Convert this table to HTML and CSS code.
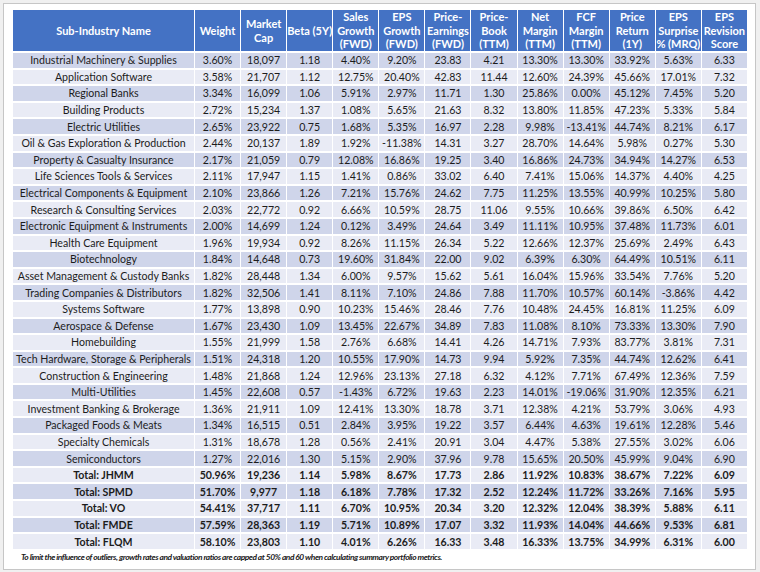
FILE: index.html
```html
<!DOCTYPE html>
<html>
<head>
<meta charset="utf-8">
<link rel="stylesheet" href="styles.css">
</head>
<body>
<div class="frame">
<table class="metrics">
<colgroup><col class="c-name"><col><col><col><col><col><col><col><col><col><col><col><col></colgroup>
<thead>
<tr><th>Sub-Industry Name</th><th>Weight</th><th>Market<br>Cap</th><th>Beta (5Y)</th><th>Sales<br>Growth<br>(FWD)</th><th>EPS<br>Growth<br>(FWD)</th><th>Price-<br>Earnings<br>(FWD)</th><th>Price-<br>Book<br>(TTM)</th><th>Net<br>Margin<br>(TTM)</th><th>FCF<br>Margin<br>(TTM)</th><th>Price<br>Return<br>(1Y)</th><th>EPS<br>Surprise<br>% (MRQ)</th><th>EPS<br>Revision<br>Score</th></tr>
</thead>
<tbody>
<tr><td>Industrial Machinery &amp; Supplies</td><td>3.60%</td><td>18,097</td><td>1.18</td><td>4.40%</td><td>9.20%</td><td>23.83</td><td>4.21</td><td>13.30%</td><td>13.30%</td><td>33.92%</td><td>5.63%</td><td>6.33</td></tr>
<tr><td>Application Software</td><td>3.58%</td><td>21,707</td><td>1.12</td><td>12.75%</td><td>20.40%</td><td>42.83</td><td>11.44</td><td>12.60%</td><td>24.39%</td><td>45.66%</td><td>17.01%</td><td>7.32</td></tr>
<tr><td>Regional Banks</td><td>3.34%</td><td>16,099</td><td>1.06</td><td>5.91%</td><td>2.97%</td><td>11.71</td><td>1.30</td><td>25.86%</td><td>0.00%</td><td>45.12%</td><td>7.45%</td><td>5.20</td></tr>
<tr><td>Building Products</td><td>2.72%</td><td>15,234</td><td>1.37</td><td>1.08%</td><td>5.65%</td><td>21.63</td><td>8.32</td><td>13.80%</td><td>11.85%</td><td>47.23%</td><td>5.33%</td><td>5.84</td></tr>
<tr><td>Electric Utilities</td><td>2.65%</td><td>23,922</td><td>0.75</td><td>1.68%</td><td>5.35%</td><td>16.97</td><td>2.28</td><td>9.98%</td><td>-13.41%</td><td>44.74%</td><td>8.21%</td><td>6.17</td></tr>
<tr><td>Oil &amp; Gas Exploration &amp; Production</td><td>2.44%</td><td>20,137</td><td>1.89</td><td>1.92%</td><td>-11.38%</td><td>14.31</td><td>3.27</td><td>28.70%</td><td>14.64%</td><td>5.98%</td><td>0.27%</td><td>5.30</td></tr>
<tr><td>Property &amp; Casualty Insurance</td><td>2.17%</td><td>21,059</td><td>0.79</td><td>12.08%</td><td>16.86%</td><td>19.25</td><td>3.40</td><td>16.86%</td><td>24.73%</td><td>34.94%</td><td>14.27%</td><td>6.53</td></tr>
<tr><td>Life Sciences Tools &amp; Services</td><td>2.11%</td><td>17,947</td><td>1.15</td><td>1.41%</td><td>0.86%</td><td>33.02</td><td>6.40</td><td>7.41%</td><td>15.06%</td><td>14.37%</td><td>4.40%</td><td>4.25</td></tr>
<tr><td>Electrical Components &amp; Equipment</td><td>2.10%</td><td>23,866</td><td>1.26</td><td>7.21%</td><td>15.76%</td><td>24.62</td><td>7.75</td><td>11.25%</td><td>13.55%</td><td>40.99%</td><td>10.25%</td><td>5.80</td></tr>
<tr><td>Research &amp; Consulting Services</td><td>2.03%</td><td>22,772</td><td>0.92</td><td>6.66%</td><td>10.59%</td><td>28.75</td><td>11.06</td><td>9.55%</td><td>10.66%</td><td>39.86%</td><td>6.50%</td><td>6.42</td></tr>
<tr><td>Electronic Equipment &amp; Instruments</td><td>2.00%</td><td>14,699</td><td>1.24</td><td>0.12%</td><td>3.49%</td><td>24.64</td><td>3.49</td><td>11.11%</td><td>10.95%</td><td>37.48%</td><td>11.73%</td><td>6.01</td></tr>
<tr><td>Health Care Equipment</td><td>1.96%</td><td>19,934</td><td>0.92</td><td>8.26%</td><td>11.15%</td><td>26.34</td><td>5.22</td><td>12.66%</td><td>12.37%</td><td>25.69%</td><td>2.49%</td><td>6.43</td></tr>
<tr><td>Biotechnology</td><td>1.84%</td><td>14,648</td><td>0.73</td><td>19.60%</td><td>31.84%</td><td>22.00</td><td>9.02</td><td>6.39%</td><td>6.30%</td><td>64.49%</td><td>10.51%</td><td>6.11</td></tr>
<tr><td>Asset Management &amp; Custody Banks</td><td>1.82%</td><td>28,448</td><td>1.34</td><td>6.00%</td><td>9.57%</td><td>15.62</td><td>5.61</td><td>16.04%</td><td>15.96%</td><td>33.54%</td><td>7.76%</td><td>5.20</td></tr>
<tr><td>Trading Companies &amp; Distributors</td><td>1.82%</td><td>32,506</td><td>1.41</td><td>8.11%</td><td>7.10%</td><td>24.86</td><td>7.88</td><td>11.70%</td><td>10.57%</td><td>60.14%</td><td>-3.86%</td><td>4.42</td></tr>
<tr><td>Systems Software</td><td>1.77%</td><td>13,898</td><td>0.90</td><td>10.23%</td><td>15.46%</td><td>28.46</td><td>7.76</td><td>10.48%</td><td>24.45%</td><td>16.81%</td><td>11.25%</td><td>6.09</td></tr>
<tr><td>Aerospace &amp; Defense</td><td>1.67%</td><td>23,430</td><td>1.09</td><td>13.45%</td><td>22.67%</td><td>34.89</td><td>7.83</td><td>11.08%</td><td>8.10%</td><td>73.33%</td><td>13.30%</td><td>7.90</td></tr>
<tr><td>Homebuilding</td><td>1.55%</td><td>21,999</td><td>1.58</td><td>2.76%</td><td>6.68%</td><td>14.41</td><td>4.26</td><td>14.71%</td><td>7.93%</td><td>83.77%</td><td>3.81%</td><td>7.31</td></tr>
<tr><td>Tech Hardware, Storage &amp; Peripherals</td><td>1.51%</td><td>24,318</td><td>1.20</td><td>10.55%</td><td>17.90%</td><td>14.73</td><td>9.94</td><td>5.92%</td><td>7.35%</td><td>44.74%</td><td>12.62%</td><td>6.41</td></tr>
<tr><td>Construction &amp; Engineering</td><td>1.48%</td><td>21,868</td><td>1.24</td><td>12.96%</td><td>23.13%</td><td>27.18</td><td>6.32</td><td>4.12%</td><td>7.71%</td><td>67.49%</td><td>12.36%</td><td>7.59</td></tr>
<tr><td>Multi-Utilities</td><td>1.45%</td><td>22,608</td><td>0.57</td><td>-1.43%</td><td>6.72%</td><td>19.63</td><td>2.23</td><td>14.01%</td><td>-19.06%</td><td>31.90%</td><td>12.35%</td><td>6.21</td></tr>
<tr><td>Investment Banking &amp; Brokerage</td><td>1.36%</td><td>21,911</td><td>1.09</td><td>12.41%</td><td>13.30%</td><td>18.78</td><td>3.71</td><td>12.38%</td><td>4.21%</td><td>53.79%</td><td>3.06%</td><td>4.93</td></tr>
<tr><td>Packaged Foods &amp; Meats</td><td>1.34%</td><td>16,515</td><td>0.51</td><td>2.84%</td><td>3.95%</td><td>19.22</td><td>3.57</td><td>6.44%</td><td>4.63%</td><td>19.61%</td><td>12.28%</td><td>5.46</td></tr>
<tr><td>Specialty Chemicals</td><td>1.31%</td><td>18,678</td><td>1.28</td><td>0.56%</td><td>2.41%</td><td>20.91</td><td>3.04</td><td>4.47%</td><td>5.38%</td><td>27.55%</td><td>3.02%</td><td>6.06</td></tr>
<tr><td>Semiconductors</td><td>1.27%</td><td>22,016</td><td>1.30</td><td>5.15%</td><td>2.90%</td><td>37.96</td><td>9.78</td><td>15.65%</td><td>20.50%</td><td>45.99%</td><td>9.04%</td><td>6.90</td></tr>
<tr class="total"><td>Total: JHMM</td><td>50.96%</td><td>19,236</td><td>1.14</td><td>5.98%</td><td>8.67%</td><td>17.73</td><td>2.86</td><td>11.92%</td><td>10.83%</td><td>38.67%</td><td>7.22%</td><td>6.09</td></tr>
<tr class="total"><td>Total: SPMD</td><td>51.70%</td><td>9,977</td><td>1.18</td><td>6.18%</td><td>7.78%</td><td>17.32</td><td>2.52</td><td>12.24%</td><td>11.72%</td><td>33.26%</td><td>7.16%</td><td>5.95</td></tr>
<tr class="total"><td>Total: VO</td><td>54.41%</td><td>37,717</td><td>1.11</td><td>6.70%</td><td>10.95%</td><td>20.34</td><td>3.20</td><td>12.32%</td><td>12.04%</td><td>38.39%</td><td>5.88%</td><td>6.11</td></tr>
<tr class="total"><td>Total: FMDE</td><td>57.59%</td><td>28,363</td><td>1.19</td><td>5.71%</td><td>10.89%</td><td>17.07</td><td>3.32</td><td>11.93%</td><td>14.04%</td><td>44.66%</td><td>9.53%</td><td>6.81</td></tr>
<tr class="total"><td>Total: FLQM</td><td>58.10%</td><td>23,803</td><td>1.10</td><td>4.01%</td><td>6.26%</td><td>16.33</td><td>3.48</td><td>16.33%</td><td>13.75%</td><td>34.99%</td><td>6.31%</td><td>6.00</td></tr>
</tbody>
</table>
<p class="note">To limit the influence of outliers, growth rates and valuation ratios are capped at 50% and 60 when calculating summary portfolio metrics.</p>
</div>
</body>
</html>
```

FILE: styles.css
```css
html, body {
  margin: 0;
  padding: 0;
  background: #f0f0f0;
}
body {
  padding: 3px;
  font-family: Lato, "Liberation Sans", sans-serif;
}
.frame {
  border: 1px solid #c6c6c6;
  background: #ffffff;
  padding: 4px 7px 0 8px;
  box-sizing: border-box;
  width: 753px;
  height: 567px;
}
.metrics {
  table-layout: fixed;
  width: 736px;
  border-collapse: separate;
  border-spacing: 1px 2px;
  font-size: 10.6px;
  color: #1c1c1c;
}
.c-name {
  width: 181px;
}
.metrics th {
  background: #4472c4;
  color: #ffffff;
  font-weight: 700;
  font-size: 11px;
  height: 41px;
  padding: 0;
  line-height: 13.5px;
  text-align: center;
  vertical-align: middle;
  white-space: nowrap;
}
.metrics td {
  height: 14.6px;
  padding: 0;
  line-height: 14px;
  text-align: center;
  white-space: nowrap;
}
.metrics tbody tr:nth-child(odd) td {
  background: #cfd5ea;
}
.metrics tbody tr:nth-child(even) td {
  background: #e9ebf5;
}
.metrics tr.total td {
  font-weight: 700;
}
.note {
  margin: 1px 0 0 9px;
  font-size: 8.4px;
  letter-spacing: -0.45px;
  font-style: italic;
  font-weight: 700;
  color: #1a1a1a;
  line-height: 11px;
}
```
